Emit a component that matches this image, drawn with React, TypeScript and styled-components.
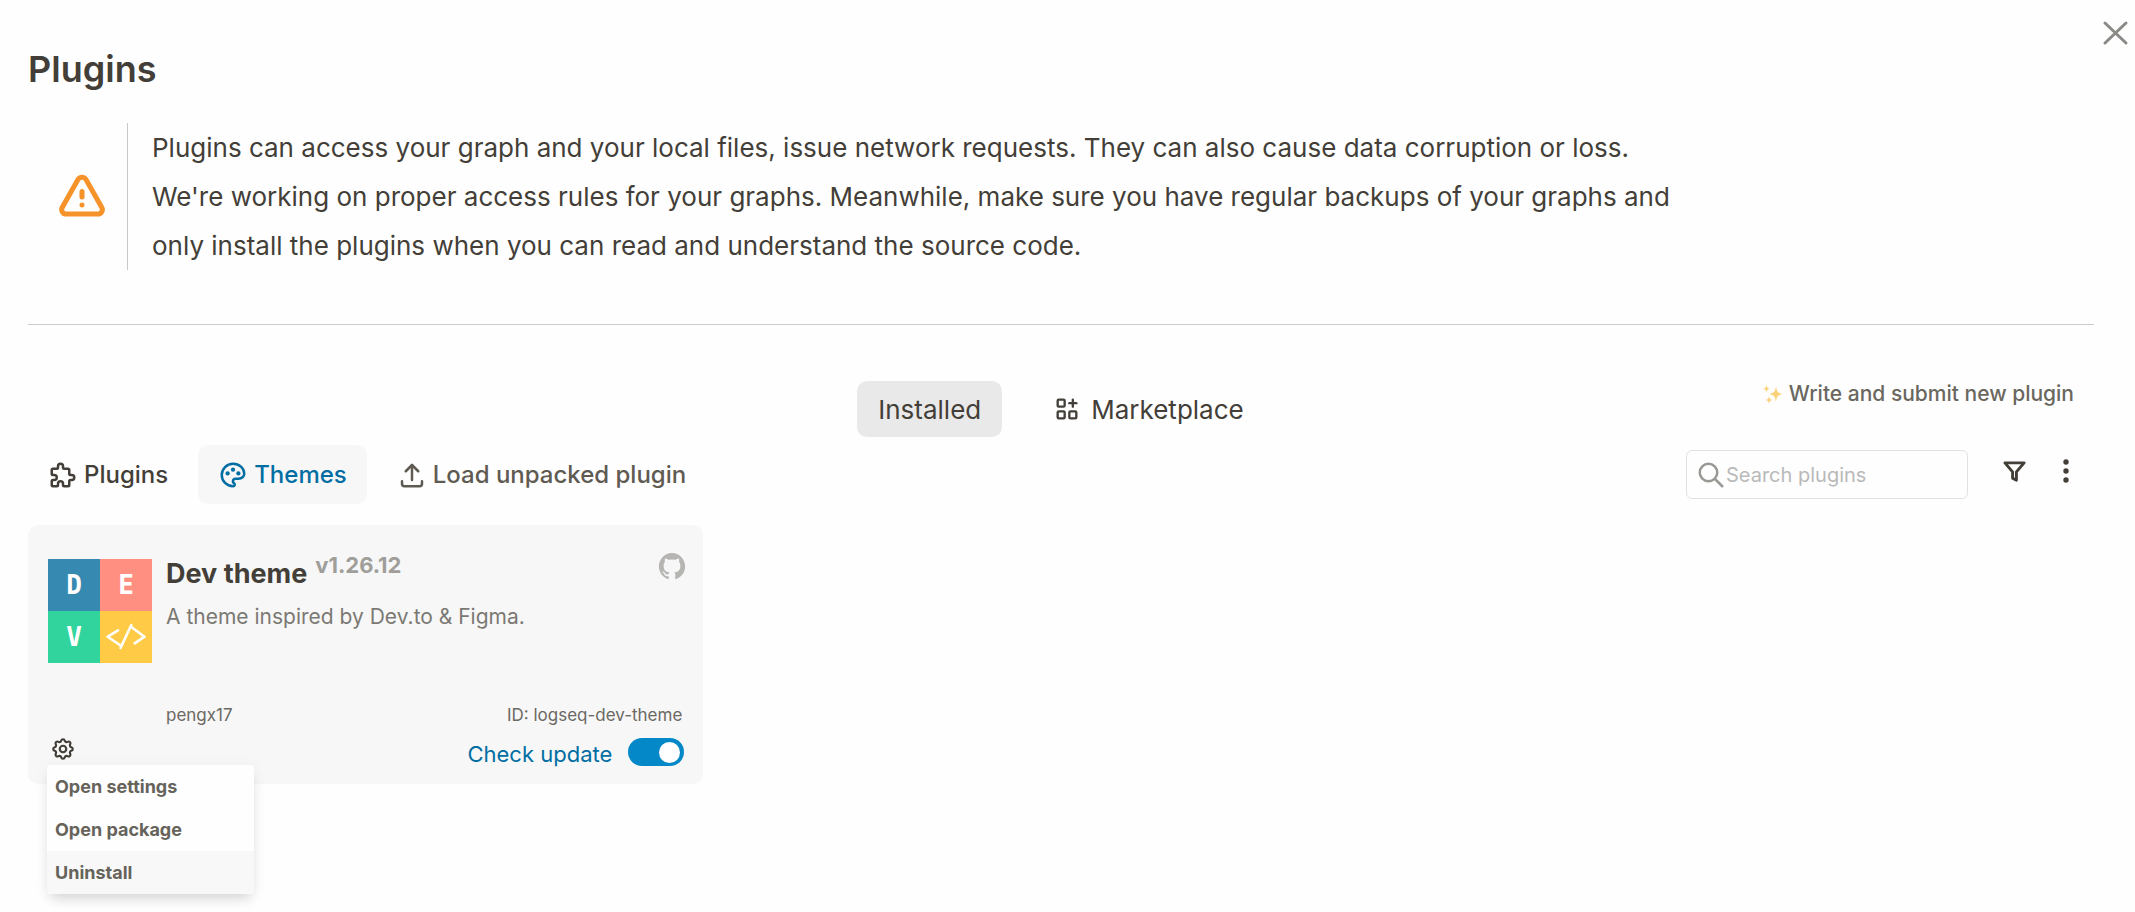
import React, { useState } from 'react';
import styled, { createGlobalStyle } from 'styled-components';
import { TbApps, TbPuzzle, TbSettings, TbUpload } from 'react-icons/tb';
import { IoLogoGithub } from 'react-icons/io5';
import { FiFilter } from 'react-icons/fi';
import { HiOutlineSearch } from 'react-icons/hi';

const GlobalStyle = createGlobalStyle`
  *, *::before, *::after { box-sizing: border-box; }
  body {
    margin: 0;
    background: #fefefe;
    color: #433f38;
    font-family: Inter, "Liberation Sans", sans-serif;
  }
  button, input { font-family: inherit; color: inherit; }
  button { border: 0; padding: 0; background: none; cursor: pointer; }
  h1, h2, p, ul { margin: 0; padding: 0; }
  svg { display: block; flex: none; }
`;

const TopBar = styled.div`
  display: flex;
  justify-content: flex-end;
  padding: 19px 6px 0;
`;

const CloseButton = styled.button`
  width: 28px;
  height: 28px;
  color: #8b8985;
`;

const Page = styled.main`
  padding: 0 41px 128px 28px;
`;

const Title = styled.h1`
  font-size: 36px;
  font-weight: 600;
  line-height: 44px;
`;

const Alert = styled.section`
  display: flex;
  align-items: center;
  margin-top: 32px;
  padding-left: 31px;
`;

const AlertText = styled.p`
  margin-left: 22px;
  padding-left: 24px;
  border-left: 1px solid #c9c9c9;
  font-size: 26px;
  line-height: 49px;
`;

const Divider = styled.hr`
  height: 1px;
  margin: 54px 0 56px;
  border: 0;
  background: #cbcbcb;
`;

const TabRow = styled.div`
  display: grid;
  grid-template-columns: 1fr auto 1fr;
`;

const Tabs = styled.nav`
  display: flex;
  grid-column: 2;
  gap: 30px;
`;

const Tab = styled.button<{ $active?: boolean }>`
  display: flex;
  align-items: center;
  gap: 10px;
  height: 56px;
  padding: 0 21px;
  border-radius: 10px;
  background: ${p => (p.$active ? '#e9e9e9' : 'transparent')};
  font-size: 26px;
`;

const SubmitLink = styled.a`
  display: flex;
  align-items: center;
  align-self: start;
  justify-self: end;
  gap: 6px;
  padding-right: 20px;
  color: #6a675f;
  font-size: 21px;
  font-weight: 500;
  line-height: 26px;
  text-decoration: none;
`;

const Toolbar = styled.div`
  display: flex;
  justify-content: space-between;
  align-items: center;
  margin-top: 8px;
`;

const Categories = styled.div`
  display: flex;
  gap: 10px;
`;

const Category = styled.button<{ $active?: boolean; $muted?: boolean }>`
  display: flex;
  align-items: center;
  gap: 6px;
  height: 59px;
  padding: 0 20px;
  border-radius: 10px;
  background: ${p => (p.$active ? '#f7f7f7' : 'transparent')};
  color: ${p => (p.$active ? '#006ea3' : p.$muted ? '#5f5b53' : '#433f38')};
  font-size: 24px;
  font-weight: 500;
`;

const Filters = styled.div`
  display: flex;
  align-self: stretch;
  padding-right: 2px;
`;

const SearchBox = styled.label`
  display: flex;
  align-items: center;
  align-self: center;
  width: 282px;
  height: 49px;
  margin-right: 20px;
  padding-left: 9px;
  border: 1px solid #e2e2e2;
  border-radius: 6px;
  color: #9a9894;
`;

const SearchInput = styled.input`
  flex: 1;
  min-width: 0;
  padding: 0;
  border: 0;
  outline: 0;
  background: none;
  font-size: 20px;
  &::placeholder { color: #b9b9b9; opacity: 1; }
`;

const IconButton = styled.button`
  display: flex;
  align-items: center;
  justify-content: center;
  width: 52px;
  height: 52px;
`;

const Grid = styled.section`
  display: grid;
  grid-template-columns: repeat(3, 1fr);
  gap: 20px;
  margin-top: 21px;
`;

const Card = styled.article`
  display: flex;
  flex-direction: column;
  min-height: 259px;
  padding: 30px 19px 14px 20px;
  border-radius: 10px;
  background: #f7f7f7;
`;

const CardTop = styled.div`
  display: flex;
  flex: 1;
  gap: 14px;
`;

const Logo = styled.div`
  display: grid;
  grid-template-columns: 52px 52px;
  grid-auto-rows: 52px;
  align-self: start;
  margin-top: 4px;
`;

const LogoTile = styled.span<{ $color: string }>`
  display: grid;
  place-items: center;
  background: ${p => p.$color};
  color: #fff;
  font: 700 26px "DejaVu Sans Mono", monospace;
`;

const Details = styled.div`
  display: flex;
  flex: 1;
  flex-direction: column;
`;

const CardHeader = styled.header`
  display: flex;
  align-items: flex-start;
  gap: 8px;
`;

const CardTitle = styled.h2`
  font-size: 27px;
  font-weight: 700;
  line-height: 37px;
`;

const Version = styled.span`
  color: #a09e9a;
  font-size: 22px;
  font-weight: 700;
  line-height: 20px;
`;

const RepoLink = styled.a`
  margin: -4px -3px 0 auto;
  color: #b6b5b2;
  font-size: 30px;
`;

const Description = styled.p`
  margin-top: 12px;
  color: #7b7973;
  font-size: 21px;
  line-height: 26px;
`;

const Meta = styled.div`
  display: flex;
  justify-content: space-between;
  margin-top: auto;
  padding-right: 2px;
  color: #6c6963;
  font-size: 17px;
  line-height: 24px;
`;

const Actions = styled.footer`
  display: flex;
  align-items: flex-start;
  gap: 16px;
  margin-top: 11px;
`;

const MenuAnchor = styled.div`
  position: relative;
  margin-right: auto;
`;

const GearButton = styled.button`
  display: flex;
  align-items: center;
  justify-content: center;
  width: 30px;
  height: 22px;
`;

const Menu = styled.ul`
  position: absolute;
  top: 27px;
  left: -1px;
  width: 207px;
  overflow: hidden;
  list-style: none;
  border-radius: 4px;
  background: #fefefe;
  box-shadow: 0 8px 12px -4px rgba(0, 0, 0, 0.14), 0 2px 16px rgba(0, 0, 0, 0.05);
`;

const MenuItem = styled.button<{ $active?: boolean }>`
  display: block;
  width: 100%;
  padding: 0 8px;
  background: ${p => (p.$active ? '#f8f8f8' : 'transparent')};
  color: #66635b;
  font-size: 18px;
  font-weight: 700;
  line-height: 43px;
  text-align: left;
`;

const UpdateButton = styled.button`
  color: #006ea3;
  font-size: 22px;
  line-height: 32px;
`;

const Toggle = styled.input`
  position: relative;
  width: 56px;
  height: 28px;
  margin: 0;
  appearance: none;
  border-radius: 14px;
  background: #c4c4c4;
  cursor: pointer;
  &::before {
    content: '';
    position: absolute;
    top: 4px;
    left: 4px;
    width: 21px;
    height: 21px;
    border-radius: 50%;
    background: #fff;
  }
  &:checked { background: #0588c7; }
  &:checked::before { left: 31px; }
`;

const CloseIcon = () => (
  <svg width="28" height="28" viewBox="0 0 28 28" fill="none" stroke="currentColor" strokeWidth="3" strokeLinecap="round">
    <path d="M4 4l21 20M25 4L4 24" />
  </svg>
);

const WarningIcon = () => (
  <svg width="46" height="48" viewBox="0 0 46 48" fill="none" stroke="#f6922a" strokeWidth="5" strokeLinecap="round" strokeLinejoin="round">
    <path d="M19 6.500a4.600 4.600 0 0 1 8 0l15.800 28a4.400 4.400 0 0 1 -3.900 6.500h-31.800a4.400 4.400 0 0 1 -3.900 -6.500z" />
    <path d="M23 18.500v5.500M23 32v.1" />
  </svg>
);

const PaletteIcon = () => (
  <svg width="30" height="30" viewBox="0 0 24 24" fill="none" stroke="currentColor" strokeWidth="2" strokeLinecap="round" strokeLinejoin="round">
    <path d="M12 21a9 9 0 0 1 0 -18c4.970 0 9 3.582 9 8c0 1.060 -.474 2.078 -1.318 2.828c-.844 .750 -1.989 1.172 -3.182 1.172h-2.500a2 2 0 0 0 -1 3.750a1.300 1.300 0 0 1 -1 2.250" />
    <g fill="currentColor" stroke="none">
      <circle cx="7.700" cy="10.700" r="1.700" />
      <circle cx="12" cy="7.700" r="1.700" />
      <circle cx="16.300" cy="10.700" r="1.700" />
    </g>
  </svg>
);

const SparklesIcon = () => (
  <svg width="20" height="20" viewBox="0 0 20 20" fill="#fbd27c">
    <path d="M13 1.500C13.600 7.500 14.800 9 20 10C14.800 11 13.600 12.500 13 18.500C12.400 12.500 11.200 11 6 10C11.200 9 12.400 7.500 13 1.500z" />
    <path d="M3.500 .5C3.900 3.500 4.500 4.200 7 4.700C4.500 5.200 3.900 5.900 3.500 8.900C3.100 5.900 2.500 5.200 0 4.700C2.500 4.200 3.100 3.500 3.500 .5z" />
    <path d="M6 12C6.400 14.800 7 15.500 9.500 16C7 16.500 6.400 17.200 6 20C5.600 17.200 5 16.500 2.500 16C5 15.500 5.600 14.800 6 12z" />
  </svg>
);

const DotsIcon = () => (
  <svg width="24" height="24" viewBox="0 0 24 24" fill="currentColor">
    <circle cx="12" cy="3" r="2.700" />
    <circle cx="12" cy="12" r="2.700" />
    <circle cx="12" cy="21" r="2.700" />
  </svg>
);

const CodeIcon = () => (
  <svg width="52" height="52" viewBox="0 0 52 52" fill="none" stroke="#fff" strokeWidth="2.600" strokeLinecap="round" strokeLinejoin="round">
    <path d="M18 19.300L7.700 25.700L20.500 34.500M31.300 14L20.500 37M31.300 16L44.500 25.700L34.700 32.300" />
  </svg>
);

export default function App() {
  const [enabled, setEnabled] = useState(true);
  const [query, setQuery] = useState('');

  return (
    <>
      <GlobalStyle />
      <TopBar>
        <CloseButton type="button" aria-label="Close"><CloseIcon /></CloseButton>
      </TopBar>
      <Page>
        <Title>Plugins</Title>
        <Alert>
          <WarningIcon />
          <AlertText>
            Plugins can access your graph and your local files, issue network requests. They can also cause data corruption or loss.<br />
            We're working on proper access rules for your graphs. Meanwhile, make sure you have regular backups of your graphs and<br />
            only install the plugins when you can read and understand the source code.
          </AlertText>
        </Alert>
        <Divider />
        <TabRow>
          <Tabs>
            <Tab type="button" $active>Installed</Tab>
            <Tab type="button"><TbApps size={28} />Marketplace</Tab>
          </Tabs>
          <SubmitLink href="#submit"><SparklesIcon />Write and submit new plugin</SubmitLink>
        </TabRow>
        <Toolbar>
          <Categories>
            <Category type="button"><TbPuzzle size={30} />Plugins</Category>
            <Category type="button" $active><PaletteIcon />Themes</Category>
            <Category type="button" $muted><TbUpload size={30} />Load unpacked plugin</Category>
          </Categories>
          <Filters>
            <SearchBox>
              <HiOutlineSearch size={30} />
              <SearchInput
                type="text"
                aria-label="Search plugins"
                placeholder="Search plugins"
                value={query}
                onChange={e => setQuery(e.target.value)}
              />
            </SearchBox>
            <IconButton type="button" aria-label="Filter"><FiFilter size={23} strokeWidth={3} /></IconButton>
            <IconButton type="button" aria-label="More"><DotsIcon /></IconButton>
          </Filters>
        </Toolbar>
        <Grid>
          <Card>
            <CardTop>
              <Logo>
                <LogoTile $color="#3689b1">D</LogoTile>
                <LogoTile $color="#ff8f81">E</LogoTile>
                <LogoTile $color="#32d49e">V</LogoTile>
                <LogoTile $color="#ffcb47"><CodeIcon /></LogoTile>
              </Logo>
              <Details>
                <CardHeader>
                  <CardTitle>Dev theme</CardTitle>
                  <Version>v1.26.12</Version>
                  <RepoLink href="#repository" aria-label="Repository"><IoLogoGithub /></RepoLink>
                </CardHeader>
                <Description>A theme inspired by Dev.to &amp; Figma.</Description>
                <Meta>
                  <span>pengx17</span>
                  <span>ID: logseq-dev-theme</span>
                </Meta>
              </Details>
            </CardTop>
            <Actions>
              <MenuAnchor>
                <GearButton type="button" aria-label="Settings"><TbSettings size={26} /></GearButton>
                <Menu>
                  <li><MenuItem type="button">Open settings</MenuItem></li>
                  <li><MenuItem type="button">Open package</MenuItem></li>
                  <li><MenuItem type="button" $active>Uninstall</MenuItem></li>
                </Menu>
              </MenuAnchor>
              <UpdateButton type="button">Check update</UpdateButton>
              <Toggle
                type="checkbox"
                role="switch"
                aria-label="Enabled"
                checked={enabled}
                onChange={e => setEnabled(e.target.checked)}
              />
            </Actions>
          </Card>
        </Grid>
      </Page>
    </>
  );
}
